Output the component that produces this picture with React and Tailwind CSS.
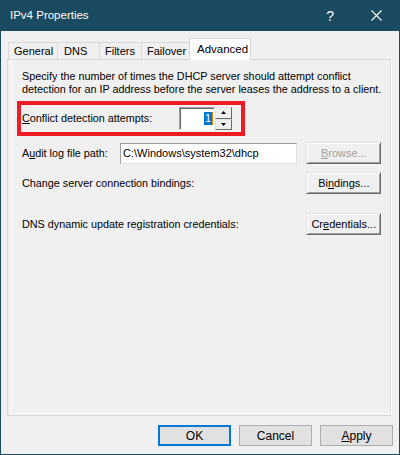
import React from "react";

const font = { fontFamily: '"Liberation Sans", Arial, sans-serif' };

function ClassicButton({ children, disabled, className = "" }) {
  return (
    <div
      className={
        "h-[22px] w-[75px] flex items-center justify-center bg-[#f0f0f0] border border-t-[#e3e3e3] border-l-[#e3e3e3] border-b-[#696969] border-r-[#696969] shadow-[inset_1px_1px_0_#ffffff,inset_-1px_-1px_0_#a0a0a0] text-[11px] " +
        (disabled ? "text-[#a0a0a0] " : "text-black ") +
        className
      }
    >
      {children}
    </div>
  );
}

function DialogButton({ children, primary }) {
  return (
    <div
      className={
        "h-[21px] w-[73px] flex items-center justify-center bg-[#e1e1e1] text-[12px] text-black " +
        (primary ? "border-2 border-[#0078d7]" : "border border-[#adadad]")
      }
    >
      {children}
    </div>
  );
}

function SpinBox() {
  return (
    <div className="flex h-[23px] w-[53px]">
      <div className="flex-1 h-full bg-white border border-t-[#a0a0a0] border-l-[#a0a0a0] border-b-white border-r-white shadow-[inset_1px_1px_0_#696969] flex items-center justify-end pr-[1px]">
        <span className="bg-[#0078d7] text-white text-[11px] leading-[13px] px-[1px]">1</span>
        <span className="w-[1px] h-[13px] bg-[#e08000]" />
      </div>
      <div className="w-[17px] h-full flex flex-col">
        <div className="flex-1 bg-[#f0f0f0] border border-t-[#e3e3e3] border-l-[#e3e3e3] border-b-[#696969] border-r-[#696969] flex items-center justify-center">
          <svg width="5" height="3" viewBox="0 0 5 3"><path d="M2.5 0 L5 3 L0 3 Z" fill="#000" /></svg>
        </div>
        <div className="flex-1 bg-[#f0f0f0] border border-t-[#e3e3e3] border-l-[#e3e3e3] border-b-[#696969] border-r-[#696969] flex items-center justify-center">
          <svg width="5" height="3" viewBox="0 0 5 3"><path d="M0 0 L5 0 L2.5 3 Z" fill="#000" /></svg>
        </div>
      </div>
    </div>
  );
}

export default function App() {
  return (
    <div style={font} className="w-[400px] h-[455px] bg-[#f0f0f0] border-x border-b border-[#1b4b60] flex flex-col">
      {/* Title bar */}
      <div className="h-[31px] bg-[#1b4b60] flex items-center text-white">
        <span className="pl-[9px] text-[11.5px] flex-1">IPv4 Properties</span>
        <span className="text-[14px] font-light mr-[37px] leading-none">?</span>
        <svg width="11" height="11" viewBox="0 0 11 11" className="mr-[17px]">
          <path d="M0.5 0.5 L10.5 10.5 M10.5 0.5 L0.5 10.5" stroke="#ffffff" strokeWidth="1.1" />
        </svg>
      </div>

      {/* Tabs */}
      <div className="mt-[7px] h-[21px] pl-[7px] flex items-end text-[11px] text-black whitespace-nowrap">
        <div className="w-[49px] h-[17px] border-l border-t border-[#d9d9d9] flex items-center pl-[5px]">General</div>
        <div className="w-[42px] h-[17px] border-l border-t border-[#d9d9d9] flex items-center pl-[6px]">DNS</div>
        <div className="w-[42px] h-[17px] border-l border-t border-[#d9d9d9] flex items-center pl-[5px]">Filters</div>
        <div className="w-[48px] h-[17px] border-l border-t border-[#d9d9d9] flex items-center pl-[5px]">Failover</div>
        <div className="relative z-10 w-[62px] h-[22px] -mb-[1px] bg-white border-l border-t border-r border-[#d9d9d9] flex items-start pt-[2px] pl-[7px] text-[11.5px]">Advanced</div>
      </div>

      {/* Panel */}
      <div className="ml-[6px] w-[384px] h-[357px] border border-[#d9d9d9] flex">
        <div className="ml-[3px] mb-[1px] flex-1 border-l border-r border-b border-white pl-[10px] pr-[10px] pt-[10px] text-[10.8px] text-black">
          <p className="leading-[13px] whitespace-nowrap">
            Specify the number of times the DHCP server should attempt conflict
            <br />
            detection for an IP address before the server leases the address to a client.
          </p>

          <div className="mt-[5px] -ml-[5px] w-[228px] h-[35px] border-4 border-[#ed1c24] flex items-center pl-[1px] pr-[9px]">
            <span>
              <u>C</u>onflict detection attempts:
            </span>
            <div className="ml-auto">
              <SpinBox />
            </div>
          </div>

          <div className="mt-[6px] h-[22px] flex items-center">
            <span className="w-[98px]">
              A<u>u</u>dit log file path:
            </span>
            <div className="w-[177px] h-[21px] bg-white border border-t-[#a0a0a0] border-l-[#a0a0a0] border-b-[#e3e3e3] border-r-[#e3e3e3] flex items-center pl-[2px] text-[11px]">
              C:\Windows\system32\dhcp
            </div>
            <ClassicButton disabled className="ml-auto">
              <span><u>B</u>rowse...</span>
            </ClassicButton>
          </div>

          <div className="mt-[8px] h-[22px] flex items-center">
            <span>Change server connection bindings:</span>
            <ClassicButton className="ml-auto">
              <span>Bi<u>n</u>dings...</span>
            </ClassicButton>
          </div>

          <div className="mt-[19px] h-[22px] flex items-center">
            <span>DNS dynamic update registration credentials:</span>
            <ClassicButton className="ml-auto">
              <span>Cr<u>e</u>dentials...</span>
            </ClassicButton>
          </div>
        </div>
      </div>

      {/* Bottom buttons */}
      <div className="mt-[9px] flex justify-end gap-[8px] pr-[6px]">
        <DialogButton primary>OK</DialogButton>
        <DialogButton>Cancel</DialogButton>
        <DialogButton>
          <span><u>A</u>pply</span>
        </DialogButton>
      </div>
    </div>
  );
}
